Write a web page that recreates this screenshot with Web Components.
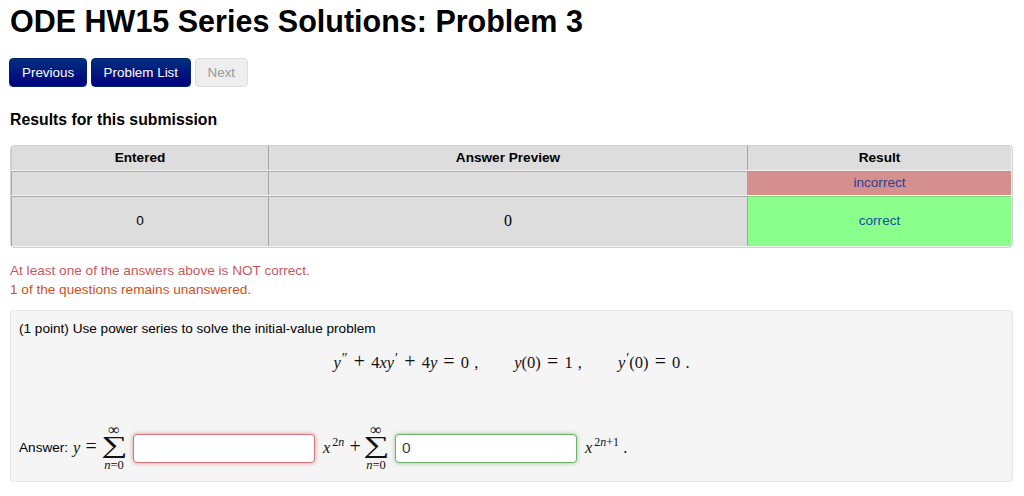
<!DOCTYPE html>
<html>
<head>
<meta charset="utf-8">
<title>ODE HW15 Series Solutions: Problem 3</title>
<style>
html, body { margin: 0; background: #fff; }
body { padding: 0 11px 0 10px; font: 13.6px/20px "Liberation Sans", Arial, sans-serif; color: #000; height: 496px; box-sizing: border-box; overflow: hidden; }
h1 { margin: 0; padding-top: 4px; font-size: 30.5px; line-height: 34px; font-weight: bold; height: 58px; box-sizing: border-box; }
</style>
</head>
<body>
<h1>ODE HW15 Series Solutions: Problem 3</h1>
<nav-buttons>
    <nav-button>Previous</nav-button>
    <nav-button>Problem List</nav-button>
    <nav-button disabled>Next</nav-button>
</nav-buttons>
<results-table></results-table>
<status-messages></status-messages>
<problem-box>
    <div slot="intro">(1 point) Use power series to solve the initial-value problem</div>
    <display-equation slot="equation"></display-equation>
    <answer-line slot="answer"></answer-line>
</problem-box>

<script>
const mathStyle = `
    .m { font-family: "Liberation Serif", "Times New Roman", serif; font-size: 16.5px; color: #111; white-space: nowrap; }
    .i { font-style: italic; }
    .o { font-size: 20px; line-height: 0; margin: 0 1px; }
    sup.p { font-size: 14px; line-height: 0; vertical-align: 5px; font-style: normal; margin-left: 1px; }
    sup.e { font-size: 12px; line-height: 0; vertical-align: 7px; font-style: normal; margin-left: 2px; }
    sup.e i { font-style: italic; }
`;

class NavButtons extends HTMLElement {
    constructor() {
        super();
        this.attachShadow({mode: 'open'}).innerHTML = `
            <style>
                :host { display: flex; gap: 3.5px; height: 29px; margin-left: -1px; }
            </style>
            <slot></slot>
        `;
    }
}

class NavButton extends HTMLElement {
    constructor() {
        super();
        this.attachShadow({mode: 'open'}).innerHTML = `
            <style>
                :host {
                    display: block;
                    box-sizing: border-box;
                    height: 29px;
                    padding: 0 12px;
                    line-height: 27px;
                    font-size: 13.4px;
                    color: #fff;
                    background: linear-gradient(#00307f, #000080);
                    border: 1px solid #00206b;
                    border-radius: 4px;
                    text-shadow: 0 -1px 0 rgba(0,0,0,.25);
                }
                :host([disabled]) {
                    color: #999;
                    background: #eee;
                    border-color: #ddd;
                    text-shadow: none;
                }
            </style>
            <slot></slot>
        `;
    }
}

class ResultsTable extends HTMLElement {
    constructor() {
        super();
        this.attachShadow({mode: 'open'}).innerHTML = `
            <style>
                :host { display: block; }
                h2 { margin: 0; padding-top: 22px; height: 58px; box-sizing: border-box; font-size: 15.8px; line-height: 22px; font-weight: bold; }
                .wrap {
                    display: grid;
                    grid-template-columns: 257px 478px 1fr;
                    grid-template-rows: 24px 24px 50px;
                    gap: 1px;
                    width: 1003px;
                    height: 103px;
                    padding: 0 1px 1px 0;
                    box-sizing: border-box;
                    border: 1px solid #d2d2d2;
                    border-radius: 4px;
                    background: #f2f2f2;
                    overflow: hidden;
                }
                .c {
                    background: #ddd;
                    display: flex;
                    align-items: center;
                    justify-content: center;
                    font-size: 13.6px;
                    border-right: 1px solid #a4a4a4;
                    margin-right: -1px;
                    border-top: 1px solid #aaa;
                    padding-bottom: 2px;
                }
                .first { border-left: 1px solid #aaa; }
                .h { font-weight: bold; border-top: 0; padding-bottom: 0; }
                .h.first { border-left-color: #ccc; }
                .last { border-right: 0; margin-right: 0; }
                .bad { background: #d58f8f; color: #2a3f8f; border-top-color: #b98a8a; }
                .good { background: #8bff8b; color: #1450a0; border-top-color: #7dd67d; }
            </style>
            <h2>Results for this submission</h2>
            <div class="wrap">
                <div class="c h first">Entered</div><div class="c h">Answer Preview</div><div class="c h last">Result</div>
                <div class="c first"></div><div class="c"></div><div class="c last bad">incorrect</div>
                <div class="c first">0</div><div class="c" style="font-family:'Liberation Serif',serif;font-size:16px">0</div><div class="c last good">correct</div>
            </div>
        `;
    }
}

class StatusMessages extends HTMLElement {
    constructor() {
        super();
        this.attachShadow({mode: 'open'}).innerHTML = `
            <style>
                :host { display: block; padding-top: 13px; height: 62px; box-sizing: border-box; font-size: 13.6px; line-height: 19px; }
                .a { color: #c9585a; }
                .b { color: #d0501a; }
            </style>
            <div class="a">At least one of the answers above is NOT correct.</div>
            <div class="b">1 of the questions remains unanswered.</div>
        `;
    }
}

class ProblemBox extends HTMLElement {
    constructor() {
        super();
        this.attachShadow({mode: 'open'}).innerHTML = `
            <style>
                :host {
                    display: block;
                    box-sizing: border-box;
                    width: 1003px;
                    height: 172px;
                    padding: 8px 8px 0;
                    background: #f5f5f5;
                    border: 1px solid #e6e6e6;
                    border-radius: 3px;
                    font-size: 13.6px;
                    line-height: 20px;
                }
            </style>
            <slot name="intro"></slot>
            <slot name="equation"></slot>
            <slot name="answer"></slot>
        `;
    }
}

class DisplayEquation extends HTMLElement {
    constructor() {
        super();
        this.attachShadow({mode: 'open'}).innerHTML = `
            <style>
                ${mathStyle}
                :host { display: flex; justify-content: center; gap: 36px; padding-top: 12px; height: 81px; box-sizing: border-box; }
                .m { word-spacing: 1px; line-height: 24px; }
            </style>
            <span class="m"><span class="i">y</span><sup class="p">&Prime;</sup> <span class="o">+</span> 4<span class="i">xy</span><sup class="p">&prime;</sup> <span class="o">+</span> 4<span class="i">y</span> <span class="o">=</span> 0 ,</span>
            <span class="m"><span class="i">y</span>(0) <span class="o">=</span> 1 ,</span>
            <span class="m"><span class="i">y</span><sup class="p">&prime;</sup>(0) <span class="o">=</span> 0 .</span>
        `;
    }
}

class SumSign extends HTMLElement {
    constructor() {
        super();
        this.attachShadow({mode: 'open'}).innerHTML = `
            <style>
                :host {
                    display: inline-flex;
                    flex-direction: column;
                    align-items: center;
                    width: 24px;
                    height: 48px;
                    flex: none;
                    font-family: "Liberation Serif", serif;
                    color: #111;
                }
                .t { font-size: 16px; line-height: 9px; height: 9px; transform: translateY(1px); }
                .s { font-family: "Liberation Serif", serif; font-size: 32px; line-height: 26px; height: 26px; transform: translateY(-1.5px) scale(1.15, .75); }
                .b { font-size: 12.5px; line-height: 13px; }
                i { font-style: italic; }
            </style>
            <span class="t">&infin;</span>
            <span class="s">&sum;</span>
            <span class="b"><i>n</i>=0</span>
        `;
    }
}

class AnswerInput extends HTMLElement {
    constructor() {
        super();
        this.attachShadow({mode: 'open'}).innerHTML = `
            <style>
                :host { display: block; flex: none; }
                input {
                    display: block;
                    box-sizing: border-box;
                    width: 182px;
                    height: 29px;
                    margin: 0;
                    padding: 0 6px;
                    font: 15.5px "Liberation Sans", Arial, sans-serif;
                    color: #444;
                    background: #fff;
                    border: 1px solid #6fb06f;
                    border-radius: 4px;
                    box-shadow: 0 0 4px rgba(80,160,80,.6);
                    outline: 0;
                }
                :host([state="bad"]) input {
                    border-color: #d9747a;
                    box-shadow: 0 0 4px rgba(210,80,80,.6);
                }
            </style>
            <input type="text">
        `;
    }
    connectedCallback() {
        this.shadowRoot.querySelector('input').value = this.getAttribute('value') || '';
    }
}

class AnswerLine extends HTMLElement {
    constructor() {
        super();
        this.attachShadow({mode: 'open'}).innerHTML = `
            <style>
                ${mathStyle}
                :host { display: flex; align-items: center; height: 56px; font-size: 13.6px; white-space: nowrap; }
                .gap { width: 7px; flex: none; }
            </style>
            <span style="width:54px;flex:none">Answer:</span><span class="m" style="width:29px;flex:none"><span class="i">y</span> <span class="o">=</span></span>
            <sum-sign></sum-sign>
            <span class="gap"></span>
            <answer-input state="bad"></answer-input>
            <span class="m" style="margin-left:8px;width:41px;flex:none"><span class="i">x</span><sup class="e">2<i>n</i></sup> <span class="o">+</span></span>
            <sum-sign></sum-sign>
            <span class="gap"></span>
            <answer-input state="good" value="0"></answer-input>
            <span class="m" style="margin-left:8px"><span class="i">x</span><sup class="e">2<i>n</i>+1</sup>&nbsp;.</span>
        `;
    }
}

customElements.define('nav-buttons', NavButtons);
customElements.define('nav-button', NavButton);
customElements.define('results-table', ResultsTable);
customElements.define('status-messages', StatusMessages);
customElements.define('problem-box', ProblemBox);
customElements.define('display-equation', DisplayEquation);
customElements.define('sum-sign', SumSign);
customElements.define('answer-input', AnswerInput);
customElements.define('answer-line', AnswerLine);
</script>
</body>
</html>
